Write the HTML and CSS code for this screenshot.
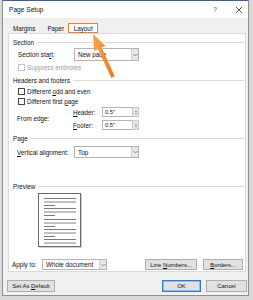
FILE: index.html
```html
<!DOCTYPE html>
<html>
<head>
<meta charset="utf-8">
<link rel="stylesheet" href="styles.css">
</head>
<body>
<div class="dialog">
  <div class="titlebar">
    <span class="title">Page Setup</span>
    <span class="help">?</span>
    <span class="close"><svg width="8" height="8" viewBox="0 0 8 8"><path d="M1 1L7 7M7 1L1 7" stroke="#333" stroke-width="0.8"/></svg></span>
  </div>
  <div class="tabs">
    <span class="tab">Margins</span>
    <span class="tab">Paper</span>
    <span class="tab active">Layout</span>
  </div>
  <div class="panel">
    <div class="gtitle g1">Section</div>
    <div class="row r-start">
      <span class="lbl">Section sta<u>r</u>t:</span>
      <div class="select"><span class="val">New page</span><span class="sbtn"><svg width="5" height="4" viewBox="0 0 5 4"><path d="M0.5 1L2.5 3L4.5 1" fill="none" stroke="#666" stroke-width="0.7"/></svg></span></div>
    </div>
    <div class="row r-check">
      <span class="cb disabled"></span><span class="muted">Suppress endnotes</span>
    </div>
    <div class="gtitle g2">Headers and footers</div>
    <div class="row r-check r-odd">
      <span class="cb"></span><span>Different <u>o</u>dd and even</span>
    </div>
    <div class="row r-check">
      <span class="cb"></span><span>Different first <u>p</u>age</span>
    </div>
    <div class="edge">
      <span class="edge-lbl">From edge:</span>
      <div class="edge-fields">
        <div class="spinrow"><span class="slbl"><u>H</u>eader:</span><span class="inp">0.5"</span><span class="spin"><i class="up"></i><i class="dn"></i></span></div>
        <div class="spinrow"><span class="slbl"><u>F</u>ooter:</span><span class="inp">0.5"</span><span class="spin"><i class="up"></i><i class="dn"></i></span></div>
      </div>
    </div>
    <div class="gtitle g3">Page</div>
    <div class="row r-valign">
      <span class="lbl"><u>V</u>ertical alignment:</span>
      <div class="select sel-small"><span class="val">Top</span><span class="sbtn"><svg width="5" height="4" viewBox="0 0 5 4"><path d="M0.5 1L2.5 3L4.5 1" fill="none" stroke="#666" stroke-width="0.7"/></svg></span></div>
    </div>
    <div class="gtitle g4">Preview</div>
    <div class="preview">
      <div class="grp"><i class="ln"></i><i class="gr"></i><i class="sh"></i></div>
      <div class="grp"><i class="ln"></i><i class="gr"></i><i class="sh"></i></div>
      <div class="grp"><i class="ln"></i><i class="gr"></i><i class="sh"></i></div>
      <div class="grp"><i class="ln"></i><i class="gr"></i><i class="sh"></i></div>
      <div class="grp"><i class="ln"></i><i class="gr"></i></div>
    </div>
    <div class="apply">
      <span class="alb">Apply to:</span>
      <div class="select sel-apply"><span class="val">Whole document</span><span class="sbtn"><svg width="5" height="4" viewBox="0 0 5 4"><path d="M0.5 1L2.5 3L4.5 1" fill="none" stroke="#666" stroke-width="0.7"/></svg></span></div>
      <div class="abtns">
        <span class="btn b-line">Line&nbsp;<u>N</u>umbers...</span>
        <span class="btn b-bord"><u>B</u>orders...</span>
      </div>
    </div>
  </div>
  <div class="footer">
    <span class="btn b-def">Set As&nbsp;<u>D</u>efault</span>
    <span class="btn b-ok">OK</span>
    <span class="btn b-cancel">Cancel</span>
  </div>
</div>
<svg class="arrow" width="253" height="300" viewBox="0 0 253 300">
  <defs>
    <linearGradient id="og" x1="0" y1="0" x2="1" y2="0">
      <stop offset="0" stop-color="#f7a24d"/>
      <stop offset="1" stop-color="#f07a1a"/>
    </linearGradient>
  </defs>
  <polygon points="93,34 105.4,46 101.6,47.6 114.8,76.2 111.2,77.8 98,49.3 94.2,51" fill="url(#og)"/>
</svg>
</body>
</html>
```

FILE: styles.css
```css
* { box-sizing: border-box; }
body {
  margin: 0;
  width: 253px;
  height: 300px;
  overflow: hidden;
  position: relative;
  background: #d9d9d9;
  font-family: "Liberation Sans", Arial, sans-serif;
  font-size: 6.3px;
  color: #111;
}
u { text-decoration: underline; text-underline-offset: 1px; }
.dialog {
  margin-left: 2px;
  width: 247px;
  height: 296px;
  background: #f0f0f0;
  border: 1px solid #8f8f8f;
  border-top-color: #3a5f9c;
  display: flex;
  flex-direction: column;
}
.titlebar {
  height: 17px;
  flex-shrink: 0;
  background: #fff;
  display: flex;
  align-items: center;
  padding-left: 6px;
}
.title { flex: 1; font-size: 6.6px; }
.help { width: 8px; text-align: center; margin-right: 16px; color: #444; font-size: 6.5px; }
.close { width: 8px; height: 8px; margin-right: 5px; display: flex; }
.tabs {
  height: 15px;
  flex-shrink: 0;
  display: flex;
  align-items: flex-end;
  padding-left: 5px;
}
.tab {
  height: 10px;
  padding: 0 5px;
  display: flex;
  align-items: center;
  margin-right: 2px;
}
.tab.active {
  margin-left: -3px;
  border: 1.5px solid #f08030;
  padding: 0 4.5px;
  background: #fff;
}
.panel {
  margin: 0 2px 0 5px;
  height: 239px;
  flex-shrink: 0;
  background: #fff;
  border: 1px solid #dadada;
  padding: 0 1px 0 4px;
  display: flex;
  flex-direction: column;
}
.gtitle {
  height: 10px;
  display: flex;
  align-items: center;
  gap: 3px;
  flex-shrink: 0;
}
.gtitle::after {
  content: "";
  flex: 1;
  height: 1px;
  background: #dcdcdc;
}
.g1 { margin-top: 3px; }
.g2 { margin-top: 3px; }
.g3 { margin-top: 3px; }
.g4 { margin-top: 23px; }
.row {
  display: flex;
  align-items: center;
  padding-left: 5px;
  flex-shrink: 0;
}
.r-start { margin-top: 1px; height: 13px; }
.r-check { height: 10px; }
.r-start + .r-check { margin-top: 1px; }
.r-odd { margin-top: 1px; }
.lbl { width: 56px; }
.cb {
  width: 7px;
  height: 7px;
  border: 1px solid #444;
  background: #fff;
  margin-right: 2px;
}
.cb.disabled { border-color: #c4c4c4; }
.muted { color: #9a9a9a; }
.select {
  width: 65px;
  height: 13px;
  border: 1px solid #b4b4b4;
  background: #fff;
  display: flex;
  align-items: center;
}
.select .val { flex: 1; padding-left: 3px; white-space: nowrap; overflow: hidden; }
.sbtn {
  width: 7px;
  height: 100%;
  background: #e6e6e6;
  border-left: 1px solid #cfcfcf;
  display: flex;
  align-items: center;
  justify-content: center;
}
.sel-small { height: 12px; }
.edge {
  margin-top: 1px;
  height: 23px;
  padding-left: 4px;
  display: flex;
  align-items: center;
  flex-shrink: 0;
}
.edge-lbl { width: 56px; }
.edge-fields { display: flex; flex-direction: column; gap: 3px; }
.spinrow { display: flex; align-items: center; height: 10px; }
.slbl { width: 29px; }
.inp {
  width: 30px;
  height: 10px;
  border: 1px solid #b4b4b4;
  border-right: none;
  padding-left: 2px;
  display: flex;
  align-items: center;
  font-size: 5.8px;
}
.spin {
  width: 7px;
  height: 10px;
  background: #e6e6e6;
  border: 1px solid #c8c8c8;
  display: flex;
  flex-direction: column;
  align-items: center;
  justify-content: center;
  gap: 1px;
}
.spin i { display: block; width: 0; height: 0; border-left: 1.5px solid transparent; border-right: 1.5px solid transparent; }
.spin .up { border-bottom: 1.5px solid #555; }
.spin .dn { border-top: 1.5px solid #555; }
.r-valign { margin-top: 3px; height: 12px; padding-left: 4px; }
.r-valign .lbl { width: 57px; }
.preview {
  margin: 2px 0 0 25px;
  width: 43px;
  height: 54px;
  flex-shrink: 0;
  border: 1px solid #6a6a6a;
  background: #fff;
  padding: 4px 0 0 5px;
  box-shadow: 1px 1px 0 #cfcfcf;
}
.grp { height: 10.3px; }
.grp i { display: block; }
.grp .ln { width: 32px; height: 1px; background: #7a7a7a; }
.grp .gr { width: 32px; height: 2px; background: #c2c2c2; margin-top: 2px; }
.grp .sh { width: 11px; height: 1px; background: #7a7a7a; margin-top: 2px; }
.apply {
  margin: 12px 1px 0 -1px;
  height: 11px;
  display: flex;
  align-items: center;
  flex-shrink: 0;
}
.alb { width: 30px; }
.sel-apply { height: 11px; }
.abtns { margin-left: auto; display: flex; gap: 6px; }
.btn {
  height: 11px;
  border: 1px solid #adadad;
  background: #e1e1e1;
  display: flex;
  align-items: center;
  justify-content: center;
  white-space: nowrap;
  font-size: 5.9px;
}
.b-line { width: 52px; }
.b-bord { width: 40px; }
.footer {
  display: flex;
  align-items: flex-start;
  padding: 8px 1px 0 4px;
}
.b-def { width: 48px; height: 12px; }
.b-ok { width: 39px; height: 12px; margin-left: auto; border-color: #2a7ad5; box-shadow: inset 0 0 0 0.5px #5a9be0; }
.b-cancel { width: 41px; height: 12px; margin-left: 5px; }
.arrow { position: absolute; left: 0; top: 0; pointer-events: none; }
```
